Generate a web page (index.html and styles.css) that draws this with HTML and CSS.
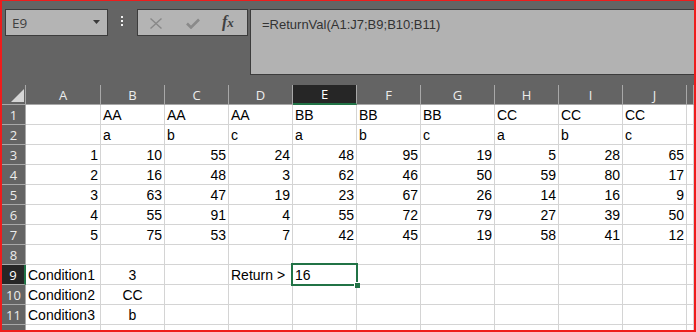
FILE: index.html
```html
<!DOCTYPE html>
<html>
<head>
<meta charset="utf-8">
<link rel="stylesheet" href="styles.css">
</head>
<body>
<div class="frame">
  <div class="toolbar">
    <div class="namebox">
      <span class="nb-text">E9</span>
      <svg class="dd" width="7" height="4" viewBox="0 0 7 4"><polygon points="0,0 7,0 3.5,4" fill="#3a3a3a"/></svg>
    </div>
    <div class="grip"><i></i><i></i><i></i></div>
    <div class="btns">
      <svg class="ic-x" width="12" height="11" viewBox="0 0 12 11"><path d="M0.5 0.5 L11.5 10.5 M11.5 0.5 L0.5 10.5" stroke="#888" stroke-width="1.4" fill="none"/></svg>
      <svg class="ic-ok" width="14" height="11" viewBox="0 0 14 11"><polyline points="1,5.5 5,9.5 13,1.5" stroke="#8a8a8a" stroke-width="2.6" fill="none"/></svg>
      <span class="fx">f<span class="fx-x">x</span></span>
    </div>
    <div class="fbar">=ReturnVal(A1:J7;B9;B10;B11)</div>
  </div>

  <div class="sheet">
    <div class="h corner"><svg width="13" height="13" viewBox="0 0 13 13"><polygon points="0,13 13,13 13,0" fill="#d6d6d6"/></svg></div>
    <div class="h">A</div><div class="h">B</div><div class="h">C</div><div class="h">D</div><div class="h hs-col">E</div><div class="h">F</div><div class="h">G</div><div class="h">H</div><div class="h">I</div><div class="h">J</div><div class="h"></div>

    <div class="h">1</div><div class="c"></div><div class="c">AA</div><div class="c">AA</div><div class="c">AA</div><div class="c">BB</div><div class="c">BB</div><div class="c">BB</div><div class="c">CC</div><div class="c">CC</div><div class="c">CC</div><div class="c"></div>

    <div class="h">2</div><div class="c"></div><div class="c">a</div><div class="c">b</div><div class="c">c</div><div class="c">a</div><div class="c">b</div><div class="c">c</div><div class="c">a</div><div class="c">b</div><div class="c">c</div><div class="c"></div>

    <div class="h">3</div><div class="c n">1</div><div class="c n">10</div><div class="c n">55</div><div class="c n">24</div><div class="c n">48</div><div class="c n">95</div><div class="c n">19</div><div class="c n">5</div><div class="c n">28</div><div class="c n">65</div><div class="c"></div>

    <div class="h">4</div><div class="c n">2</div><div class="c n">16</div><div class="c n">48</div><div class="c n">3</div><div class="c n">62</div><div class="c n">46</div><div class="c n">50</div><div class="c n">59</div><div class="c n">80</div><div class="c n">17</div><div class="c"></div>

    <div class="h">5</div><div class="c n">3</div><div class="c n">63</div><div class="c n">47</div><div class="c n">19</div><div class="c n">23</div><div class="c n">67</div><div class="c n">26</div><div class="c n">14</div><div class="c n">16</div><div class="c n">9</div><div class="c"></div>

    <div class="h">6</div><div class="c n">4</div><div class="c n">55</div><div class="c n">91</div><div class="c n">4</div><div class="c n">55</div><div class="c n">72</div><div class="c n">79</div><div class="c n">27</div><div class="c n">39</div><div class="c n">50</div><div class="c"></div>

    <div class="h">7</div><div class="c n">5</div><div class="c n">75</div><div class="c n">53</div><div class="c n">7</div><div class="c n">42</div><div class="c n">45</div><div class="c n">19</div><div class="c n">58</div><div class="c n">41</div><div class="c n">12</div><div class="c"></div>

    <div class="h">8</div><div class="c"></div><div class="c"></div><div class="c"></div><div class="c"></div><div class="c"></div><div class="c"></div><div class="c"></div><div class="c"></div><div class="c"></div><div class="c"></div><div class="c"></div>

    <div class="h hs-row">9</div><div class="c">Condition1</div><div class="c m">3</div><div class="c"></div><div class="c">Return &gt;</div><div class="c sel">16<div class="selbox"><div class="handle"></div></div></div><div class="c"></div><div class="c"></div><div class="c"></div><div class="c"></div><div class="c"></div><div class="c"></div>

    <div class="h">10</div><div class="c">Condition2</div><div class="c m">CC</div><div class="c"></div><div class="c"></div><div class="c"></div><div class="c"></div><div class="c"></div><div class="c"></div><div class="c"></div><div class="c"></div><div class="c"></div>

    <div class="h">11</div><div class="c">Condition3</div><div class="c m">b</div><div class="c"></div><div class="c"></div><div class="c"></div><div class="c"></div><div class="c"></div><div class="c"></div><div class="c"></div><div class="c"></div><div class="c"></div>

    <div class="h"></div><div class="c"></div><div class="c"></div><div class="c"></div><div class="c"></div><div class="c"></div><div class="c"></div><div class="c"></div><div class="c"></div><div class="c"></div><div class="c"></div><div class="c"></div>
  </div>
</div>
</body>
</html>
```

FILE: styles.css
```css
html, body {
  margin: 0;
  padding: 0;
  background: #646464;
}

.frame {
  width: 696px;
  height: 332px;
  box-sizing: border-box;
  border-style: solid;
  border-color: #ee1c1c;
  border-width: 1px 2px 2px 2px;
  background: #646464;
  overflow: hidden;
}

.toolbar {
  height: 84px;
  box-sizing: border-box;
  padding: 8px 0 0 3px;
  display: flex;
  align-items: flex-start;
}

.namebox {
  width: 103px;
  height: 27px;
  box-sizing: border-box;
  border: 1px solid #3c3c3c;
  background: #b4b4b4;
  display: flex;
  align-items: center;
  justify-content: space-between;
  padding: 0 7px 0 6px;
}

.nb-text {
  font: 13.5px "Open Sans", sans-serif;
  color: #404040;
  margin-top: 1px;
}

.dd {
  display: block;
  margin-top: -2px;
}

.grip {
  margin-left: 13px;
  width: 2px;
  padding-top: 7px;
  display: flex;
  flex-direction: column;
  gap: 2px;
}

.grip i {
  display: block;
  width: 2px;
  height: 2px;
  background: #f2f2f2;
}

.btns {
  margin-left: 14px;
  width: 111px;
  height: 27px;
  box-sizing: border-box;
  border: 1px solid #3c3c3c;
  background: #b4b4b4;
  display: flex;
  align-items: center;
  padding-left: 12px;
}

.ic-x {
  display: block;
  margin-top: 1px;
}

.ic-ok {
  display: block;
  margin-left: 24px;
  margin-top: 2px;
}

.fx {
  margin-left: 22px;
  font: italic bold 16px "Liberation Serif", serif;
  color: #404040;
  margin-top: -1px;
}

.fx-x {
  font-size: 13px;
}

.fbar {
  flex: 1;
  margin-left: 2px;
  height: 66px;
  box-sizing: border-box;
  border: 1px solid #3c3c3c;
  border-right: none;
  background: #b2b2b2;
  padding: 7px 0 0 11px;
  font: 13px/16px "Liberation Sans", sans-serif;
  color: #333;
}

.sheet {
  display: grid;
  grid-template-columns: 24px 75px 64px 64px 64px 64px 64px 74px 64px 64px 64px 1fr;
  grid-auto-rows: 20px;
  position: relative;
}

.h {
  background: #646464;
  border-right: 1px solid #a8a8a8;
  border-bottom: 1px solid #a8a8a8;
  box-sizing: border-box;
  color: #ececec;
  font: 13px "Open Sans", sans-serif;
  display: flex;
  align-items: center;
  justify-content: center;
}

.corner {
  justify-content: flex-end;
  align-items: flex-end;
  padding: 0 1px 2px 0;
}

.corner svg {
  display: block;
}

.hs-col {
  background: #262626;
  color: #fff;
  border-bottom: 2px solid #217346;
}

.hs-row {
  background: #262626;
  color: #fff;
  border-right: 2px solid #217346;
}

.c {
  background: #fff;
  border-right: 1px solid #d4d4d4;
  border-bottom: 1px solid #d4d4d4;
  box-sizing: border-box;
  font: 14px/16px "Liberation Sans", sans-serif;
  color: #000;
  padding: 0 2px 1px 2px;
  display: flex;
  align-items: flex-end;
  white-space: nowrap;
}

.n {
  justify-content: flex-end;
}

.m {
  justify-content: center;
}

.sel {
  position: relative;
}

.selbox {
  position: absolute;
  left: -2px;
  top: -2px;
  right: -2px;
  bottom: -2px;
  border: 2px solid #217346;
  z-index: 2;
}

.handle {
  position: absolute;
  right: -4px;
  bottom: -4px;
  width: 5px;
  height: 5px;
  background: #217346;
  border-left: 1px solid #fff;
  border-top: 1px solid #fff;
}
```
